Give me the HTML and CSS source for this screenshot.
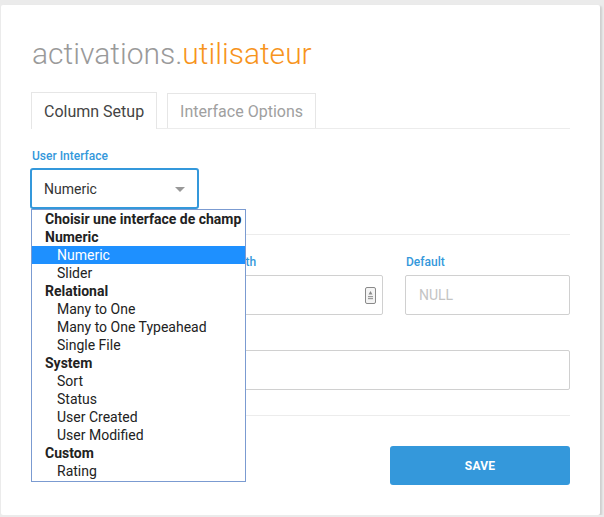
FILE: index.html
```html
<!DOCTYPE html>
<html>
<head>
<meta charset="utf-8">
<link rel="stylesheet" href="styles.css">
</head>
<body>
<div class="card">
  <h1 class="title">activations.<span class="accent">utilisateur</span></h1>
  <div class="tabs">
    <div class="tab active">Column Setup</div>
    <div class="tab">Interface Options</div>
  </div>
  <div class="ui-field">
    <div class="label">User Interface</div>
    <div class="select-wrap">
      <div class="select">
        <span>Numeric</span>
        <span class="caret"></span>
      </div>
      <div class="dropdown">
        <div class="opt group">Choisir une interface de champ</div>
        <div class="opt group">Numeric</div>
        <div class="opt sel">Numeric</div>
        <div class="opt">Slider</div>
        <div class="opt group">Relational</div>
        <div class="opt">Many to One</div>
        <div class="opt">Many to One Typeahead</div>
        <div class="opt">Single File</div>
        <div class="opt group">System</div>
        <div class="opt">Sort</div>
        <div class="opt">Status</div>
        <div class="opt">User Created</div>
        <div class="opt">User Modified</div>
        <div class="opt group">Custom</div>
        <div class="opt">Rating</div>
      </div>
    </div>
  </div>
  <hr class="sep">
  <div class="row3">
    <div class="field">
      <div class="label">Data Type</div>
      <div class="input">INT</div>
    </div>
    <div class="field">
      <div class="label">Length</div>
      <div class="input num">
        <svg class="spin" width="11" height="17" viewBox="0 0 11 17">
          <rect x="0.5" y="0.5" width="10" height="16" rx="1.5" fill="#f4f4f4" stroke="#8a8a8a"/>
          <path d="M5.5 4 L7.5 7.5 L3.5 7.5 Z" fill="#8a8a8a"/>
          <rect x="3" y="9" width="5" height="1.2" fill="#9a9a9a"/>
          <rect x="3" y="11" width="5" height="1.2" fill="#9a9a9a"/>
        </svg>
      </div>
    </div>
    <div class="field">
      <div class="label">Default</div>
      <div class="input placeholder">NULL</div>
    </div>
  </div>
  <div class="field full">
    <div class="label">Comment</div>
    <div class="input"></div>
  </div>
  <hr class="sep">
  <div class="actions">
    <div class="btn">SAVE</div>
  </div>
</div>
</body>
</html>
```

FILE: styles.css
```css
html, body {
  margin: 0;
  padding: 0;
  background: #ebebeb;
  font-family: Roboto, "Noto Sans", "Liberation Sans", sans-serif;
}
.card {
  margin: 5px 0 0 1px;
  width: 599px;
  box-sizing: border-box;
  background: #fff;
  padding: 32px 30px 30px 30px;
  box-shadow: 2px 1px 2px rgba(0,0,0,0.12);
  border-radius: 2px;
}
.title {
  margin: 0;
  font-size: 30px;
  line-height: 34px;
  font-weight: 300;
  color: #9a9a9a;
  padding-left: 1px;
}
.accent { color: #f7941d; }
.tabs {
  margin-top: 21px;
  display: flex;
  align-items: flex-end;
  gap: 10px;
  border-bottom: 1px solid #ececec;
  height: 36px;
}
.tab {
  height: 35px;
  box-sizing: border-box;
  border: 1px solid #e6e6e6;
  border-bottom: 0;
  padding: 0 12px;
  display: flex;
  align-items: center;
  font-size: 16px;
  color: #a0a0a0;
  background: #fff;
}
.tab.active {
  color: #444;
  height: 37px;
  margin-bottom: -1px;
}
.ui-field { margin-top: 19px; }
.label {
  font-size: 12px;
  line-height: 16px;
  font-weight: 500;
  color: #3498db;
  padding-left: 1px;
  margin-bottom: 4px;
}
.select-wrap { position: relative; width: 169px; margin-left: -1px; }
.select {
  height: 41px;
  box-sizing: border-box;
  border: 2px solid #3498db;
  border-radius: 3px;
  display: flex;
  align-items: center;
  justify-content: space-between;
  padding: 0 12px 0 12px;
  font-size: 14px;
  color: #333;
}
.caret {
  width: 0; height: 0;
  border-left: 5px solid transparent;
  border-right: 5px solid transparent;
  border-top: 5px solid #999;
  margin-top: 1px;
}
.dropdown {
  position: absolute;
  left: 1px;
  top: 41px;
  width: 215px;
  box-sizing: border-box;
  border: 1px solid #7b9bd1;
  background: #fff;
  padding: 0 0 1px 0;
  z-index: 5;
}
.opt {
  height: 18px;
  line-height: 18px;
  font-size: 14px;
  color: #222;
  padding-left: 25px;
  white-space: nowrap;
}
.opt.group { font-weight: 700; padding-left: 13px; color: #222; }
.opt.sel { background: #1e90ff; color: #fff; }
.sep {
  border: 0;
  border-top: 1px solid #ececec;
  margin: 25px 0 0 0;
}
.row3 {
  margin-top: 19px;
  display: grid;
  grid-template-columns: 165px 165px 165px;
  column-gap: 22px;
}
.field .label { margin-bottom: 5px; }
.input {
  height: 40px;
  box-sizing: border-box;
  border: 1px solid #d0d0d0;
  border-radius: 2px;
  font-size: 14px;
  color: #333;
  display: flex;
  align-items: center;
  padding: 0 13px;
}
.input.placeholder { color: #c4c4c4; }
.input.num { justify-content: flex-end; padding-right: 6px; }
.field.full { margin-top: 14px; }
.actions {
  display: flex;
  justify-content: flex-end;
  margin-top: 30px;
}
.btn {
  width: 180px;
  height: 39px;
  background: #3498db;
  color: #fff;
  border-radius: 3px;
  font-size: 12px;
  font-weight: 700;
  display: flex;
  align-items: center;
  justify-content: center;
  letter-spacing: 0.2px;
}
```
